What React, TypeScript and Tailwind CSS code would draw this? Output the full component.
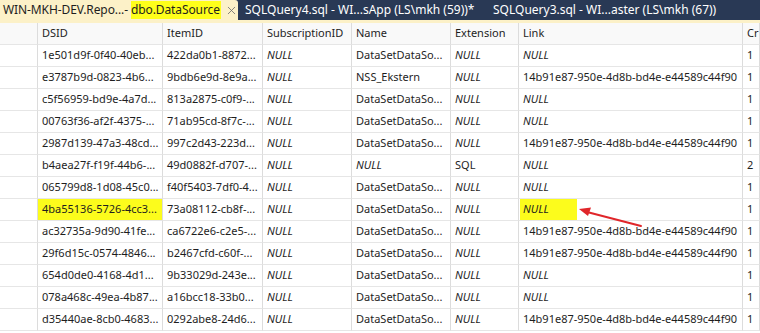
import { X } from 'lucide-react'

type Row = {
  dsid: string
  item: string
  name: string
  ext: string
  link: string
  cr: string
  mark?: boolean
}

const LINK = '14b91e87-950e-4d8b-bd4e-e44589c44f90'
const DS = 'DataSetDataSo...'

const rows: Row[] = [
  { dsid: '1e501d9f-0f40-40eb...', item: '422da0b1-8872...', name: DS, ext: 'NULL', link: 'NULL', cr: '1' },
  { dsid: 'e3787b9d-0823-4b6...', item: '9bdb6e9d-8e9a...', name: 'NSS_Ekstern', ext: 'NULL', link: LINK, cr: '1' },
  { dsid: 'c5f56959-bd9e-4a7d...', item: '813a2875-c0f9-...', name: DS, ext: 'NULL', link: 'NULL', cr: '1' },
  { dsid: '00763f36-af2f-4375-...', item: '71ab95cd-8f7c-...', name: DS, ext: 'NULL', link: 'NULL', cr: '1' },
  { dsid: '2987d139-47a3-48cd...', item: '997c2d43-223d...', name: DS, ext: 'NULL', link: LINK, cr: '1' },
  { dsid: 'b4aea27f-f19f-44b6-...', item: '49d0882f-d707-...', name: 'NULL', ext: 'SQL', link: 'NULL', cr: '2' },
  { dsid: '065799d8-1d08-45c0...', item: 'f40f5403-7df0-4...', name: DS, ext: 'NULL', link: 'NULL', cr: '1' },
  { dsid: '4ba55136-5726-4cc3...', item: '73a08112-cb8f-...', name: DS, ext: 'NULL', link: 'NULL', cr: '1', mark: true },
  { dsid: 'ac32735a-9d90-41fe...', item: 'ca6722e6-c2e5-...', name: DS, ext: 'NULL', link: LINK, cr: '1' },
  { dsid: '29f6d15c-0574-4846...', item: 'b2467cfd-c60f-...', name: DS, ext: 'NULL', link: LINK, cr: '1' },
  { dsid: '654d0de0-4168-4d1...', item: '9b33029d-243e...', name: DS, ext: 'NULL', link: 'NULL', cr: '1' },
  { dsid: '078a468c-49ea-4b87...', item: 'a16bcc18-33b0...', name: DS, ext: 'NULL', link: 'NULL', cr: '1' },
  { dsid: 'd35440ae-8cb0-4683...', item: '0292abe8-24d6...', name: DS, ext: 'NULL', link: LINK, cr: '1' },
]

const cols = 'grid grid-cols-[38px_125px_100px_89px_99px_68px_224px_1fr]'
const cell = 'h-[22px] flex items-center pl-[4px] border-r border-b border-r-[#dcdcdc] border-b-[#e6e6e6] whitespace-nowrap overflow-hidden'

function Val({ v }: { v: string }) {
  return v === 'NULL' ? <span className="italic">NULL</span> : <span>{v}</span>
}

export default function App() {
  return (
    <div
      className="w-[760px] h-[333px] overflow-hidden bg-white text-[11px] text-[#1e1e1e] relative"
      style={{ fontFamily: '"Noto Sans", "Open Sans", sans-serif' }}
    >
      {/* Document tabs */}
      <div className="h-[20px] bg-[#293955] flex items-stretch text-[12px] whitespace-nowrap">
        <div className="w-[238px] shrink-0 bg-[#fcf1c8] rounded-tr-[3px] flex items-center pl-[3px] text-[#1e1e1e]">
          <span className="tracking-[-0.1px]">WIN-MKH-DEV.Repo...-</span>
          <span className="bg-[#ffff1a] ml-[3px] pr-[1px] h-[18px] flex items-center tracking-[-0.1px]">dbo.DataSource</span>
          <X size={13} strokeWidth={1.5} className="ml-[4px] shrink-0 text-[#6b6b6b]" />
        </div>
        <div className="w-[255px] shrink-0 flex items-center pl-[7px] text-white">
          SQLQuery4.sql - WI...sApp (LS\mkh (59))*
        </div>
        <div className="flex items-center text-white">SQLQuery3.sql - WI...aster (LS\mkh (67))</div>
      </div>
      <div className="h-[3px] bg-[#fcf1c8]" />

      {/* Results grid */}
      <div className={`${cols} bg-[#f9f9f9]`}>
        <div className={`${cell} border-r-[#c4c4c4]`} />
        <div className={cell}>DSID</div>
        <div className={cell}>ItemID</div>
        <div className={cell}>SubscriptionID</div>
        <div className={cell}>Name</div>
        <div className={cell}>Extension</div>
        <div className={cell}>Link</div>
        <div className={cell}>Cr</div>
      </div>
      {rows.map((r, i) => (
        <div key={i} className={cols}>
          <div className={`${cell} border-r-[#c4c4c4]`} />
          <div className={`${cell} ${r.mark ? 'bg-[#fcfc1c]' : ''}`}>{r.dsid}</div>
          <div className={cell}>{r.item}</div>
          <div className={cell}>
            <Val v="NULL" />
          </div>
          <div className={cell}>
            <Val v={r.name} />
          </div>
          <div className={cell}>
            <Val v={r.ext} />
          </div>
          <div className={cell}>
            {r.mark ? (
              <span className="bg-[#fcfc1c] h-[22px] w-[57px] -ml-[3px] pl-[3px] flex items-center italic">NULL</span>
            ) : (
              <Val v={r.link} />
            )}
          </div>
          <div className={cell}>{r.cr}</div>
        </div>
      ))}

      {/* Red annotation arrow */}
      <svg className="absolute left-[575px] top-[202px] pointer-events-none" width="70" height="28" viewBox="0 0 70 28">
        <line x1="66" y1="24" x2="12" y2="10" stroke="#e0262a" strokeWidth="2" strokeLinecap="round" />
        <polygon points="4,7 16,5.5 13,14" fill="#e0262a" />
      </svg>
    </div>
  )
}
